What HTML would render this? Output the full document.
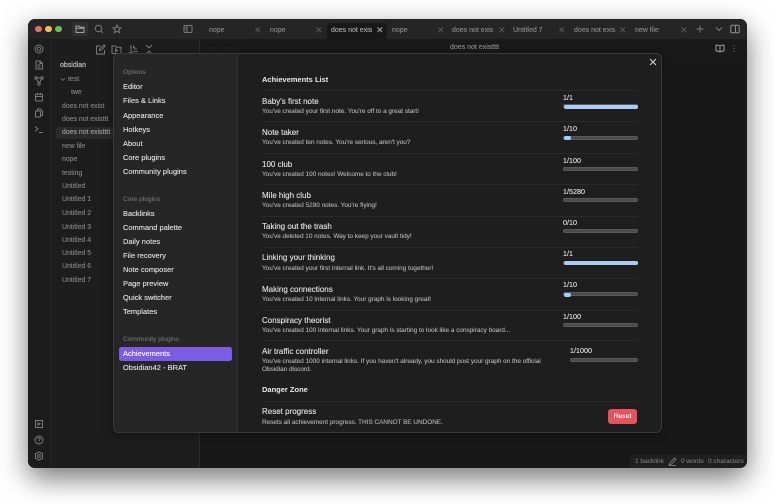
<!DOCTYPE html>
<html><head><meta charset="utf-8"><style>
html,body{margin:0;padding:0;width:775px;height:504px;background:#fff;overflow:hidden;font-family:"Liberation Sans",sans-serif}
div,span,svg{position:absolute}
.t{white-space:nowrap;line-height:10px;height:10px;-webkit-text-stroke:.12px currentColor}
.tab{font-size:7px;color:#8a8a8a;top:26px}
.x{font-size:9px;color:#5c5c5c;top:25px;-webkit-text-stroke:0}
.f{font-size:6.9px;color:#858585;left:62px}
.n{font-size:7.4px;color:#e2e2e2;left:123px;letter-spacing:.05px}
.h{font-size:6.6px;color:#707070;left:123px}
.a{font-size:8px;color:#e2e2e2;left:262px}
.d{font-size:6.4px;color:#b0b0b0;left:262px}
.p{font-size:7.2px;color:#e2e2e2;left:563px}
.b{left:563px;width:74.500px;height:4px;box-sizing:border-box;background:#4a4a4a;border-radius:2px;border:.5px solid #5a5a5a}
.b i{position:absolute;left:-.5px;top:-.5px;height:4px;background:#a8cdf7;border-radius:2px;display:block}
.l{left:262px;width:375px;height:1px;background:#2a2a2a}
svg{fill:none;stroke:#7a7a7a;stroke-width:1}
</style></head><body>
<div style="left:28px;top:19px;width:719px;height:449px;border-radius:7px;background:#181818;box-shadow:0 10px 28px rgba(0,0,0,.55);overflow:hidden">
<div style="left:0;top:0;width:719px;height:20px;background:#252525"></div>
<div style="left:0;top:20px;width:22px;height:429px;background:#1c1c1c;border-right:1px solid #232323"></div>
<div style="left:23px;top:20px;width:148px;height:429px;background:#1d1d1d;border-right:1px solid #2b2b2b"></div>
<div style="left:172px;top:20px;width:547px;height:20px;background:#191919"></div>
</div>

<!-- traffic lights -->
<div style="left:35.250px;top:25.750px;width:6.500px;height:6.500px;border-radius:50%;background:#ef6a5f"></div>
<div style="left:45.250px;top:25.750px;width:6.500px;height:6.500px;border-radius:50%;background:#f5bd4f"></div>
<div style="left:55.250px;top:25.750px;width:6.500px;height:6.500px;border-radius:50%;background:#61c554"></div>
<div style="left:72px;top:22px;width:16px;height:14px;border-radius:3px;background:#303030"></div>
<svg style="left:75px;top:24px" width="10" height="10" viewBox="0 0 10 10"><path d="M1 2h3l1 1.200h4v5.300H1zM1 4.200h8" stroke="#a0a0a0"/></svg>
<svg style="left:94px;top:24px" width="10" height="10" viewBox="0 0 10 10"><circle cx="4.500" cy="4.500" r="3.300"/><path d="M7 7l2 2"/></svg>
<svg style="left:112px;top:24px" width="10" height="10" viewBox="0 0 10 10"><path d="M5 1l1.200 2.600 2.800.3-2.100 1.900.6 2.800L5 7.200 2.500 8.600l.6-2.800L1 3.900l2.800-.3z"/></svg>
<svg style="left:183px;top:24px" width="10" height="10" viewBox="0 0 10 10"><rect x="1" y="1.500" width="8" height="7" rx="1"/><path d="M4 1.500v7"/><path d="M1.500 3.500h2M1.500 5h2" stroke-width=".6"/></svg>

<!-- tabs -->
<div style="left:327px;top:23px;width:60px;height:16px;background:#181818;border-radius:4px 4px 0 0"></div>
<div class="t tab" style="left:209px">nope</div><div class="t x" style="left:254px">✕</div>
<div class="t tab" style="left:270px">nope</div><div class="t x" style="left:315px">✕</div>
<div class="t tab" style="left:331px;color:#b0b0b0">does not exis</div><div class="t x" style="left:376px;color:#bbb">✕</div>
<div class="t tab" style="left:392px">nope</div><div class="t x" style="left:437px">✕</div>
<div class="t tab" style="left:452px">does not exis</div><div class="t x" style="left:498px">✕</div>
<div class="t tab" style="left:513px">Untitled 7</div><div class="t x" style="left:558px">✕</div>
<div class="t tab" style="left:574px">does not exis</div><div class="t x" style="left:619px">✕</div>
<div class="t tab" style="left:635px">new file</div><div class="t x" style="left:680px">✕</div>
<svg style="left:696px;top:25px" width="8" height="8" viewBox="0 0 8 8"><path d="M4 .5v7M.5 4h7"/></svg>
<svg style="left:715px;top:26px" width="8" height="6" viewBox="0 0 8 6"><path d="M1 1.500l3 3 3-3"/></svg>
<svg style="left:730px;top:24px" width="10" height="10" viewBox="0 0 10 10"><rect x=".8" y="1.200" width="8.400" height="7.600" rx="1" stroke="#909090"/><path d="M5.500 1.200v7.600" stroke="#909090"/></svg>

<!-- ribbon -->
<svg style="left:34px;top:44px" width="10" height="10" viewBox="0 0 10 10"><circle cx="5" cy="5" r="4"/><circle cx="5" cy="5" r="1.800"/></svg>
<svg style="left:34px;top:60px" width="10" height="10" viewBox="0 0 10 10"><path d="M2 1h4l2.500 2.500V9H2zM6 1v2.500h2.500M3.500 5h3M3.500 7h3"/></svg>
<svg style="left:34px;top:76px" width="10" height="10" viewBox="0 0 10 10"><circle cx="2" cy="2" r="1.200"/><circle cx="8" cy="2" r="1.200"/><circle cx="5" cy="8" r="1.200"/><path d="M2.500 3l2.200 4M7.500 3L5.300 7M3 2h4"/></svg>
<svg style="left:34px;top:92px" width="10" height="10" viewBox="0 0 10 10"><rect x="1.500" y="2" width="7" height="7" rx="1"/><path d="M1.500 4.500h7M3.500 1v2M6.500 1v2"/></svg>
<svg style="left:34px;top:108px" width="10" height="10" viewBox="0 0 10 10"><rect x="1.500" y="3" width="5" height="6" rx=".8"/><path d="M3.500 3V1h3l2 2v4.500H6.500"/></svg>
<svg style="left:34px;top:124px" width="10" height="10" viewBox="0 0 10 10"><path d="M1 2.500l3 2.500-3 2.500M5 8.500h4"/></svg>
<svg style="left:34px;top:419px" width="10" height="10" viewBox="0 0 10 10"><rect x="1.500" y="1.500" width="7" height="7"/><path d="M4 4l2 .8-2 1.200z"/></svg>
<svg style="left:34px;top:435px" width="10" height="10" viewBox="0 0 10 10"><circle cx="5" cy="5" r="4"/><path d="M3.800 4c0-1.600 2.500-1.600 2.500 0 0 1-1.300 1-1.300 2M5 7.200v.5"/></svg>
<svg style="left:34px;top:451px" width="10" height="10" viewBox="0 0 10 10"><path d="M5 .8l3.600 2.100v4.200L5 9.200 1.400 7.100V2.900z"/><circle cx="5" cy="5" r="1.400"/></svg>

<!-- sidebar tools -->
<svg style="left:95px;top:44px" width="11" height="11" viewBox="0 0 11 11"><path d="M5.500 2H1.500v8h8V6M4.500 6.500l.4-1.800L9 .8l1.200 1.200-4 4.100z"/></svg>
<svg style="left:111px;top:44px" width="11" height="11" viewBox="0 0 11 11"><path d="M1 2h3.500l1 1.300H10v6.200H1zM4.500 5l2 1.400-2 1.400z"/></svg>
<svg style="left:128px;top:44px" width="11" height="11" viewBox="0 0 11 11"><path d="M3 1v8.500M1 8l2 2 2-2M5.500 1.500v2h1.500M5.500 5h3.500M5.500 7.500h4.500" /></svg>
<svg style="left:144px;top:44px" width="10" height="11" viewBox="0 0 10 11"><path d="M2 1l3 3 3-3M2 10l3-3 3 3"/></svg>

<!-- file list -->
<div style="left:56px;top:127px;width:60px;height:12px;background:#2a2a2a;border-radius:3px"></div>
<div class="t" style="left:60px;top:61px;font-size:7px;color:#b4b4b4;-webkit-text-stroke:.25px #b4b4b4">obsidian</div>
<svg style="left:60px;top:77px" width="6" height="5" viewBox="0 0 6 5"><path d="M1 1l2 2.500 2-2.500" stroke="#6a6a6a"/></svg>
<div class="t f" style="left:68px;top:74.500px">test</div>
<div class="t f" style="left:71px;top:88px">twe</div>
<div class="t f" style="top:101.500px">does not exist</div>
<div class="t f" style="top:115px">does not existtt</div>
<div class="t f" style="top:128px;color:#a0a0a0">does not existttt</div>
<div class="t f" style="top:141.500px">new file</div>
<div class="t f" style="top:155px">nope</div>
<div class="t f" style="top:168.500px">testing</div>
<div class="t f" style="top:182px">Untitled</div>
<div class="t f" style="top:195px">Untitled 1</div>
<div class="t f" style="top:209px">Untitled 2</div>
<div class="t f" style="top:222.500px">Untitled 3</div>
<div class="t f" style="top:235.500px">Untitled 4</div>
<div class="t f" style="top:249px">Untitled 5</div>
<div class="t f" style="top:262px">Untitled 6</div>
<div class="t f" style="top:275.500px">Untitled 7</div>

<!-- header -->
<div class="t" style="left:208px;top:43px;font-size:7px;color:#3d3d3d">←</div>
<div class="t" style="left:223px;top:43px;font-size:7px;color:#3d3d3d">→</div>
<div class="t" style="left:450px;top:43px;font-size:7px;color:#8f8f8f">does not existttt</div>
<svg style="left:715px;top:44px" width="10" height="9" viewBox="0 0 10 9"><path d="M5 2C4 1 2.500 1 1 1v6c1.500 0 3 0 4 1 1-1 2.500-1 4-1V1C7.500 1 6 1 5 2zv6" stroke="#9a9a9a"/></svg>
<svg style="left:732px;top:44px" width="4" height="9" viewBox="0 0 4 9"><path d="M2 1v.8M2 4v.8M2 7v.8" stroke="#9a9a9a"/></svg>

<!-- status -->
<div style="left:630px;top:455px;width:117px;height:13px;background:#1f1f1f;border-radius:4px 0 7px 0"></div>
<div class="t" style="left:635px;top:457px;font-size:6.500px;color:#777">1 backlink</div>
<svg style="left:668px;top:457px" width="9" height="9" viewBox="0 0 9 9"><path d="M1 8l.6-2L6.500 1 8 2.500 3 7.400zM1 8.500h7" stroke="#6f6f6f"/></svg>
<div class="t" style="left:681px;top:457px;font-size:6.500px;color:#777">0 words</div>
<div class="t" style="left:708px;top:457px;font-size:6.500px;color:#777">0 characters</div>

<!-- modal -->
<div style="left:113px;top:53px;width:547px;height:378px;border:1.500px solid #3a3a3a;border-radius:6px;background:#1e1e1e;box-shadow:0 2px 10px rgba(0,0,0,.35);overflow:hidden">
<div style="left:0;top:0;width:123px;height:378px;background:#262626;border-right:1px solid #303030"></div>
</div>
<div style="left:119px;top:347px;width:113px;height:13.500px;background:#7b5ce6;border-radius:2.500px"></div>
<svg style="left:649px;top:58px" width="8" height="8" viewBox="0 0 8 8"><path d="M1 1l6 6M7 1L1 7" stroke="#d0d0d0" stroke-width="1.100"/></svg>

<div class="t h" style="top:68px">Options</div>
<div class="t n" style="top:82px">Editor</div>
<div class="t n" style="top:96px">Files &amp; Links</div>
<div class="t n" style="top:110.500px">Appearance</div>
<div class="t n" style="top:124.500px">Hotkeys</div>
<div class="t n" style="top:138.500px">About</div>
<div class="t n" style="top:153px">Core plugins</div>
<div class="t n" style="top:167px">Community plugins</div>
<div class="t h" style="top:194.500px">Core plugins</div>
<div class="t n" style="top:208.500px">Backlinks</div>
<div class="t n" style="top:222.500px">Command palette</div>
<div class="t n" style="top:237px">Daily notes</div>
<div class="t n" style="top:251px">File recovery</div>
<div class="t n" style="top:265px">Note composer</div>
<div class="t n" style="top:279px">Page preview</div>
<div class="t n" style="top:293px">Quick switcher</div>
<div class="t n" style="top:307px">Templates</div>
<div class="t h" style="top:334.500px">Community plugins</div>
<div class="t n" style="top:348.500px;color:#fff">Achievements</div>
<div class="t n" style="top:363px">Obsidian42 - BRAT</div>

<div class="t" style="left:262px;top:75px;font-size:7.500px;font-weight:bold;color:#e8e8e8;-webkit-text-stroke:0">Achievements List</div>
<div class="l" style="top:90px"></div>
<div class="t a" style="top:96.500px">Baby's first note</div>
<div class="t d" style="top:107px">You've created your first note. You're off to a great start!</div>
<div class="t p" style="top:93px">1/1</div><div class="b" style="top:104px"><i style="width:74.500px"></i></div>
<div class="l" style="top:121px"></div>
<div class="t a" style="top:128px">Note taker</div>
<div class="t d" style="top:138px">You've created ten notes. You're serious, aren't you?</div>
<div class="t p" style="top:124px">1/10</div><div class="b" style="top:135.500px"><i style="width:7.500px"></i></div>
<div class="l" style="top:153px"></div>
<div class="t a" style="top:159.500px">100 club</div>
<div class="t d" style="top:169.500px">You've created 100 notes! Welcome to the club!</div>
<div class="t p" style="top:155.500px">1/100</div><div class="b" style="top:167px"></div>
<div class="l" style="top:184px"></div>
<div class="t a" style="top:190.500px">Mile high club</div>
<div class="t d" style="top:201px">You've created 5280 notes. You're flying!</div>
<div class="t p" style="top:186.500px">1/5280</div><div class="b" style="top:198px"></div>
<div class="l" style="top:215.500px"></div>
<div class="t a" style="top:222px">Taking out the trash</div>
<div class="t d" style="top:232px">You've deleted 10 notes. Way to keep your vault tidy!</div>
<div class="t p" style="top:218px">0/10</div><div class="b" style="top:229px"></div>
<div class="l" style="top:247px"></div>
<div class="t a" style="top:253px">Linking your thinking</div>
<div class="t d" style="top:263.500px">You've created your first internal link. It's all coming together!</div>
<div class="t p" style="top:249px">1/1</div><div class="b" style="top:260.500px"><i style="width:74.500px"></i></div>
<div class="l" style="top:278px"></div>
<div class="t a" style="top:284.500px">Making connections</div>
<div class="t d" style="top:294.500px">You've created 10 internal links. Your graph is looking great!</div>
<div class="t p" style="top:280px">1/10</div><div class="b" style="top:292px"><i style="width:7.500px"></i></div>
<div class="l" style="top:309.500px"></div>
<div class="t a" style="top:316px">Conspiracy theorist</div>
<div class="t d" style="top:326px">You've created 100 internal links. Your graph is starting to look like a conspiracy board...</div>
<div class="t p" style="top:311.500px">1/100</div><div class="b" style="top:323px"></div>
<div class="l" style="top:340px"></div>
<div class="t a" style="top:347px">Air traffic controller</div>
<div class="t d" style="top:357px">You've created 1000 internal links. If you haven't already, you should post your graph on the official</div>
<div class="t d" style="top:365px">Obsidian discord.</div>
<div class="t p" style="top:346px;left:570px">1/1000</div><div class="b" style="top:358px;left:570px;width:67.500px"></div>
<div class="t" style="left:262px;top:385px;font-size:7.500px;font-weight:bold;color:#e8e8e8;-webkit-text-stroke:0">Danger Zone</div>
<div class="l" style="top:400.500px"></div>
<div class="t a" style="top:407px">Reset progress</div>
<div class="t d" style="top:417.500px">Resets all achievement progress. THIS CANNOT BE UNDONE.</div>
<div style="left:608px;top:409px;width:29px;height:15px;background:#e9525a;border-radius:3px"></div>
<div class="t" style="left:608px;top:411.500px;width:29px;text-align:center;font-size:6.800px;color:#fff">Reset</div>
</body></html>
